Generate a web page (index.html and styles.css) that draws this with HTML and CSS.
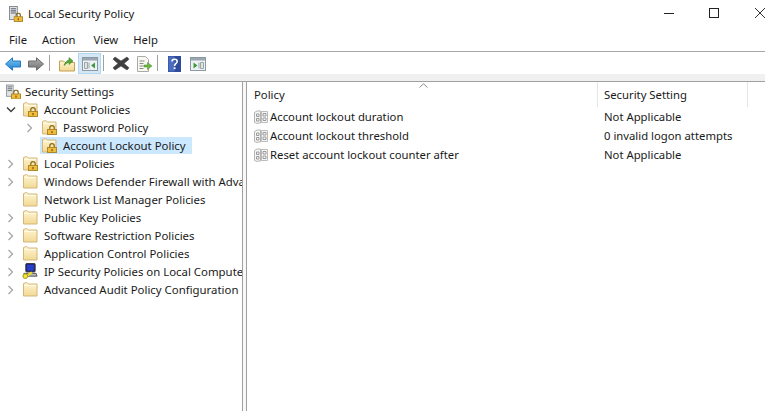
FILE: index.html
```html
<!DOCTYPE html>
<html lang="en">
<head>
<meta charset="utf-8">
<title>Local Security Policy</title>
<link rel="stylesheet" href="styles.css">
</head>
<body>
<svg class="sprite" aria-hidden="true">
  <defs>
    <linearGradient id="fold" x1="0" y1="0" x2="0" y2="1"><stop offset="0" stop-color="#fff6d2"/><stop offset="1" stop-color="#f2d994"/></linearGradient>
    <linearGradient id="blue" x1="0" y1="0" x2="0" y2="1"><stop offset="0" stop-color="#7cc8f4"/><stop offset="1" stop-color="#1c7fd0"/></linearGradient>
    <linearGradient id="grey" x1="0" y1="0" x2="0" y2="1"><stop offset="0" stop-color="#b4b4b4"/><stop offset="1" stop-color="#6f6f6f"/></linearGradient>
    <symbol id="lock" viewBox="0 0 9 9">
      <path d="M2.500 4V2.600a2 2 0 0 1 4 0V4" fill="none" stroke="#8a6a20" stroke-width="1.100"/>
      <rect x=".5" y="4" width="8" height="4.600" fill="#f0bc3c" stroke="#a8801f" stroke-width=".8"/>
      <rect x="4" y="5.400" width="1" height="2" fill="#6b4e10"/>
    </symbol>
    <symbol id="folder" viewBox="0 0 16 16">
      <path d="M1.500 15V2.500l3-1 2 1.500h8.500v12z" fill="url(#fold)" stroke="#d2b67a"/>
      <path d="M2.500 4.500h11.500" stroke="#fffbe6"/>
    </symbol>
    <symbol id="server" viewBox="0 0 16 17">
      <rect x=".5" y=".5" width="9" height="15" fill="#dfe3e6" stroke="#7c8288"/>
      <path d="M2 3h6M2 5.500h6M2 8h6" stroke="#5f666d" stroke-width="1.200"/>
    </symbol>
    <symbol id="policy" viewBox="0 0 14 14">
      <path d="M.5 2.500 3 1h3.500v12L4 13l-1 .5-2.500-1z" fill="#f6f6f6" stroke="#b4b4b4"/>
      <path d="M7.500 1.500h6v11h-6z" fill="#f6f6f6" stroke="#bcbcbc"/>
      <path d="M2.500 4h2.500v2.500H2.500zM9 3.500h3v2.500H9zM2.500 8.500h2.500V11H2.500zM9 8h3v2.500H9z" fill="none" stroke="#9a9a9a"/>
    </symbol>
    <symbol id="ipsec" viewBox="0 0 16 17">
      <rect x="3.500" y=".5" width="10" height="9" rx="1" fill="#23287e" stroke="#3a3a3a"/>
      <rect x="5" y="2" width="7" height="6" fill="#2740c8"/>
      <path d="M1.500 11h13l1 3h-14z" fill="#b9b9b9" stroke="#555"/>
      <path d="M2 15.500 10 10" stroke="#f0e020" stroke-width="2.400"/>
      <circle cx="3" cy="14" r="2.500" fill="#f5e63a" stroke="#9d9220"/>
    </symbol>
    <symbol id="chev-r" viewBox="0 0 8 10"><path d="M1.500 1 5.500 5l-4 4" fill="none" stroke="#a6a6a6" stroke-width="1.300"/></symbol>
    <symbol id="chev-d" viewBox="0 0 10 8"><path d="M1 1.500 5 5.500l4-4" fill="none" stroke="#404040" stroke-width="1.500"/></symbol>
  </defs>
</svg>

<header class="titlebar">
  <svg class="title-icon" viewBox="0 0 14 17">
    <use href="#server" width="14" height="17"/>
    <use href="#lock" x="4.500" y="7.500" width="9.500" height="9.500"/>
  </svg>
  <span class="title-text">Local Security Policy</span>
  <div class="win-controls">
    <svg class="win-btn" viewBox="0 0 10 10"><path d="M0 5.500h10" stroke="#222"/></svg>
    <svg class="win-btn" viewBox="0 0 10 10"><rect x=".5" y=".5" width="9" height="9" fill="none" stroke="#222"/></svg>
    <svg class="win-btn" viewBox="0 0 10 10"><path d="M0 0l10 10M10 0 0 10" stroke="#333"/></svg>
  </div>
</header>

<nav class="menubar">
  <span class="menu-item">File</span>
  <span class="menu-item">Action</span>
  <span class="menu-item">View</span>
  <span class="menu-item">Help</span>
</nav>

<div class="toolbar">
  <span class="tool"><svg class="tool-icon" viewBox="0 0 16 14"><path d="M.5 7 7.500.8v3.200h8v6h-8v3.200z" fill="url(#blue)" stroke="#2a78bf"/></svg></span>
  <span class="tool"><svg class="tool-icon" viewBox="0 0 16 14"><path d="M15.500 7 8.500.8v3.200h-8v6h8v3.200z" fill="url(#grey)" stroke="#6a6a6a"/></svg></span>
  <span class="tool-sep"></span>
  <span class="tool"><svg class="tool-icon tool-tall" viewBox="0 0 16 16"><path d="M.5 15V5h4l1.500 1.500h9.500V15z" fill="url(#fold)" stroke="#c2a052"/><path d="M5 9.500C6 6 8 4.500 10 4V1.500l4 3.500-4 3.500V6C8.500 6.500 7 8 5 9.500z" fill="#5aa83a" stroke="#3f8a2a" stroke-width=".6"/></svg></span>
  <span class="tool tool-active"><svg class="tool-icon" viewBox="0 0 16 14"><rect x=".5" y=".5" width="15" height="13" fill="#eef2f4" stroke="#8d99a2"/><path d="M1 1h14v2.500H1z" fill="#9aa6b0"/><path d="M2.500 5.500h3v6h-3zM7 5.500v6" fill="#dfe8d8" stroke="#9aa6b0"/><path d="M13 5.500v6L9 8.500z" fill="#3c9a3c"/></svg></span>
  <span class="tool-sep"></span>
  <span class="tool"><svg class="tool-icon tool-wide" viewBox="0 0 17 15"><path d="M2.500 1 8.500 5l6-4 2 2.200-5 4.300 5 4.300-2 2.200-6-4-6 4-2-2.200 5-4.300-5-4.300z" fill="#3f3f3f" stroke="#555" stroke-width=".7"/></svg></span>
  <span class="tool"><svg class="tool-icon tool-tall" viewBox="0 0 16 16"><path d="M1.500.5h8l3 3v12h-11z" fill="#f8f8f0" stroke="#aaa"/><path d="M3.500 5h5M3.500 7.500h4M3.500 10h4M3.500 12.500h4" stroke="#8a8a8a"/><path d="M8 9h3.500V6.500L16 10l-4.500 3.500V11H8z" fill="#6db642" stroke="#4b8f2d" stroke-width=".5"/></svg></span>
  <span class="tool-sep"></span>
  <span class="tool"><svg class="tool-icon help-icon" viewBox="0 0 13 16"><rect width="13" height="16" fill="#2f4c9c"/><rect x=".5" y=".5" width="6" height="15" fill="#4c6cc0"/><path d="M4 5.500C4 2.500 9.200 2.500 9.200 5.500 9.200 7.500 6.600 7.500 6.600 10" fill="none" stroke="#fff" stroke-width="1.600"/><rect x="5.700" y="11.300" width="1.800" height="1.800" fill="#fff"/></svg></span>
  <span class="tool"><svg class="tool-icon" viewBox="0 0 16 14"><rect x=".5" y=".5" width="15" height="13" fill="#eef2f4" stroke="#8d99a2"/><path d="M1 1h14v2.500H1z" fill="#9aa6b0"/><path d="M10.500 5.500h3v6h-3zM9 5.500v6" fill="#dfe8d8" stroke="#9aa6b0"/><path d="M3.500 5.500v6l4-3z" fill="#3c9a3c"/></svg></span>
</div>

<div class="band"></div>

<main class="panes">
  <aside class="tree">
    <div class="row root"><svg class="node-icon" viewBox="0 0 16 16"><use href="#server" x="1" width="12" height="16"/><use href="#lock" x="6" y="6.500" width="10" height="10"/></svg><span class="root-label">Security Settings</span></div>

    <div class="row l1"><svg class="exp exp-open"><use href="#chev-d"/></svg><svg class="node-icon"><use href="#folder"/><use href="#lock" x="6" y="6" width="10" height="10"/></svg><span class="label">Account Policies</span></div>
    <div class="row l2"><svg class="exp"><use href="#chev-r"/></svg><svg class="node-icon"><use href="#folder"/><use href="#lock" x="6" y="6" width="10" height="10"/></svg><span class="label">Password Policy</span></div>
    <div class="row l2"><span class="exp-blank exp-sel"></span><span class="selected"><svg class="node-icon"><use href="#folder"/><use href="#lock" x="6" y="6" width="10" height="10"/></svg><span class="label">Account Lockout Policy</span></span></div>
    <div class="row l1"><svg class="exp"><use href="#chev-r"/></svg><svg class="node-icon"><use href="#folder"/><use href="#lock" x="6" y="6" width="10" height="10"/></svg><span class="label">Local Policies</span></div>
    <div class="row l1"><svg class="exp"><use href="#chev-r"/></svg><svg class="node-icon"><use href="#folder"/></svg><span class="label">Windows Defender Firewall with Advanced Security</span></div>
    <div class="row l1"><span class="exp-blank"></span><svg class="node-icon"><use href="#folder"/></svg><span class="label">Network List Manager Policies</span></div>
    <div class="row l1"><svg class="exp"><use href="#chev-r"/></svg><svg class="node-icon"><use href="#folder"/></svg><span class="label">Public Key Policies</span></div>
    <div class="row l1"><svg class="exp"><use href="#chev-r"/></svg><svg class="node-icon"><use href="#folder"/></svg><span class="label">Software Restriction Policies</span></div>
    <div class="row l1"><svg class="exp"><use href="#chev-r"/></svg><svg class="node-icon"><use href="#folder"/></svg><span class="label">Application Control Policies</span></div>
    <div class="row l1"><svg class="exp"><use href="#chev-r"/></svg><svg class="node-icon"><use href="#ipsec"/></svg><span class="label">IP Security Policies on Local Computer</span></div>
    <div class="row l1"><svg class="exp"><use href="#chev-r"/></svg><svg class="node-icon"><use href="#folder"/></svg><span class="label">Advanced Audit Policy Configuration</span></div>
  </aside>

  <div class="splitter"></div>

  <section class="list">
    <div class="list-header">
      <div class="col-name head-cell">Policy<svg class="sort" viewBox="0 0 9 5"><path d="M.5 4.500 4.500.8l4 3.700" fill="none" stroke="#8a8a8a"/></svg></div>
      <div class="col-value head-cell">Security Setting</div>
    </div>
    <div class="list-row"><div class="col-name cell"><svg class="policy-icon"><use href="#policy"/></svg>Account lockout duration</div><div class="col-value cell">Not Applicable</div></div>
    <div class="list-row"><div class="col-name cell"><svg class="policy-icon"><use href="#policy"/></svg>Account lockout threshold</div><div class="col-value cell">0 invalid logon attempts</div></div>
    <div class="list-row"><div class="col-name cell"><svg class="policy-icon"><use href="#policy"/></svg>Reset account lockout counter after</div><div class="col-value cell">Not Applicable</div></div>
  </section>
</main>
</body>
</html>
```
FILE: styles.css
```css
* { box-sizing: border-box; }
html, body { height: 100%; }
body {
  margin: 0;
  height: 100vh;
  overflow: hidden;
  display: flex;
  flex-direction: column;
  background: #fff;
  color: #1a1a1a;
  font-family: "Noto Sans", "Open Sans", sans-serif;
  font-size: 11.3px;
  white-space: nowrap;
}
.sprite { display: block; width: 0; height: 0; flex: none; }

.titlebar { flex: none; height: 28px; display: flex; align-items: center; padding: 0 0 2px 9px; }
.title-icon { width: 14px; height: 17px; margin-right: 5px; }
.win-controls { margin-left: auto; display: flex; gap: 35px; }
.win-btn { width: 10px; height: 10px; display: block; margin-top: -1px; }
.win-btn:nth-child(2) { margin-right: 1px; }

.menubar { flex: none; height: 24px; display: flex; align-items: center; padding: 0 0 1px 9px; gap: 15px; border-bottom: 1px solid #a8a8a8; }
.menu-item:nth-child(2) { margin-right: 3px; }

.toolbar { flex: none; height: 22px; display: flex; align-items: stretch; padding: 1px 0 0 1px; }
.tool { width: 23px; display: flex; align-items: center; justify-content: center; border: 1px solid transparent; }
.tool-active { background: #d3e7f6; border-color: #b2d7f0; }
.tool-icon { width: 16px; height: 14px; display: block; }
.tool-tall { height: 16px; }
.tool-wide { width: 18px; height: 15px; }
.help-icon { width: 13px; height: 16px; }
.tool-sep { width: 1px; margin: 2px 5px 3px 2px; background: #a0a0a0; }

.band { flex: none; height: 7px; background: #f0f0f0; }

.panes { flex: 1; min-height: 0; display: flex; border-top: 1px solid #a0a0a0; }
.tree { width: 243px; flex: none; overflow: hidden; border-right: 1px solid #a0a0a0; font-size: 11.4px; }
.splitter { width: 3px; flex: none; background: #f8f8f8; }
.list { flex: 1; border-left: 1px solid #a0a0a0; min-width: 0; }

.row { height: 18px; display: flex; align-items: center; }
.root { padding-left: 5px; }
.l1 { padding-left: 3px; }
.l2 { padding-left: 22px; }
.exp { width: 8px; height: 10px; flex: none; margin: 1px 7px 0 4px; }
.exp-open { width: 10px; height: 8px; margin: 1px 6px 0 3px; }
.exp-blank { width: 19px; flex: none; }
.exp-sel { width: 18px; }
.selected {
  display: flex;
  align-items: center;
  height: 18px;
  padding: 0 6px 0 1px;
  background: linear-gradient(#cce8ff, #cce8ff) 0 1px / 100% 17px no-repeat;
}
.node-icon { width: 16px; height: 16px; flex: none; margin-right: 6px; }
.root .node-icon { margin-right: 4px; }

.list-header { display: flex; height: 25px; }
.list-row { display: flex; height: 19px; }
.col-name { width: 351px; flex: none; padding-left: 7px; }
.col-value { width: 150px; flex: none; padding-left: 6px; }
.head-cell { position: relative; display: flex; align-items: center; border-right: 1px solid #e5e5e5; }
.cell { display: flex; align-items: center; }
.sort { position: absolute; left: 172px; top: 1px; width: 9px; height: 5px; }
.policy-icon { width: 14px; height: 14px; flex: none; margin-right: 2px; }
```
